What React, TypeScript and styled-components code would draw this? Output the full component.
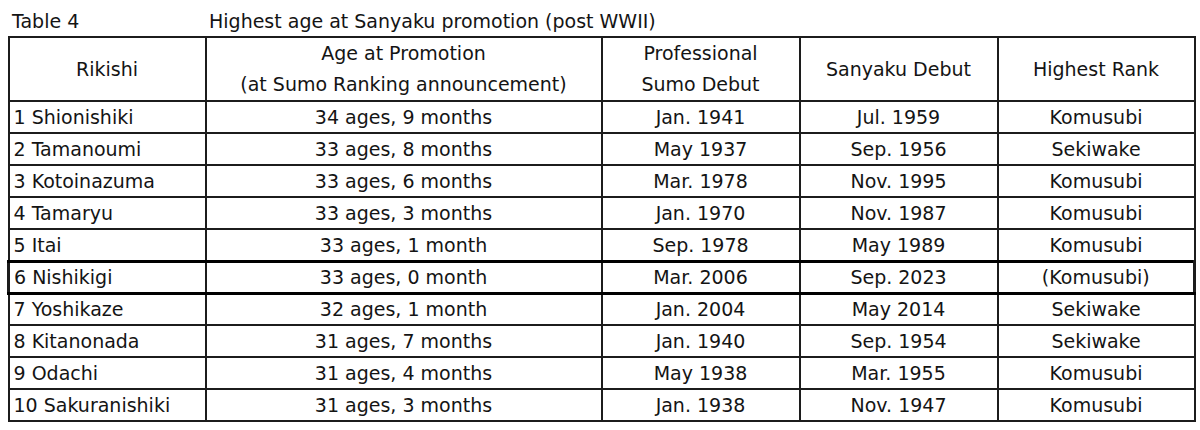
import React from "react";
import styled, { createGlobalStyle } from "styled-components";

const GlobalStyle = createGlobalStyle`
  body {
    margin: 0;
    background: #ffffff;
    color: #141414;
    font-family: "DejaVu Sans", "Noto Sans", sans-serif;
  }
`;

const Page = styled.div`
  padding: 0 7px;
  width: 1186px;
`;

const Caption = styled.div`
  display: grid;
  grid-template-columns: 197px 1fr;
  box-sizing: border-box;
  height: 36px;
  padding-top: 5px;
  align-items: center;
  font-size: 19px;
`;

const CaptionPart = styled.span`
  padding-left: 5px;
`;

const Table = styled.table`
  border-collapse: collapse;
  table-layout: fixed;
  width: 1186px;
  font-size: 19px;
`;

const HeadCell = styled.th`
  font-weight: normal;
  border: 2px solid #1c1c1c;
  height: 62px;
  padding: 0;
  text-align: center;
  line-height: 31px;
`;

const Row = styled.tr<{ $marked?: boolean }>`
  height: 32px;
  & > td {
    border-top-width: ${({ $marked }) => ($marked ? "3px" : "2px")};
    border-bottom-width: ${({ $marked }) => ($marked ? "3px" : "2px")};
    border-top-color: ${({ $marked }) => ($marked ? "#000" : "#1c1c1c")};
    border-bottom-color: ${({ $marked }) => ($marked ? "#000" : "#1c1c1c")};
  }
  & > td:first-child {
    border-left-width: ${({ $marked }) => ($marked ? "3px" : "2px")};
  }
  & > td:last-child {
    border-right-width: ${({ $marked }) => ($marked ? "3px" : "2px")};
  }
`;

const Cell = styled.td<{ $left?: boolean }>`
  border: 2px solid #1c1c1c;
  padding: 0 ${({ $left }) => ($left ? "4px" : "0")};
  text-align: ${({ $left }) => ($left ? "left" : "center")};
  white-space: nowrap;
  line-height: 28px;
`;

const widths = [197, 396, 198, 198, 197];

const rows = [
  ["1 Shionishiki", "34 ages, 9 months", "Jan. 1941", "Jul. 1959", "Komusubi"],
  ["2 Tamanoumi", "33 ages, 8 months", "May 1937", "Sep. 1956", "Sekiwake"],
  ["3 Kotoinazuma", "33 ages, 6 months", "Mar. 1978", "Nov. 1995", "Komusubi"],
  ["4 Tamaryu", "33 ages, 3 months", "Jan. 1970", "Nov. 1987", "Komusubi"],
  ["5 Itai", "33 ages, 1 month", "Sep. 1978", "May 1989", "Komusubi"],
  ["6 Nishikigi", "33 ages, 0 month", "Mar. 2006", "Sep. 2023", "(Komusubi)"],
  ["7 Yoshikaze", "32 ages, 1 month", "Jan. 2004", "May 2014", "Sekiwake"],
  ["8 Kitanonada", "31 ages, 7 months", "Jan. 1940", "Sep. 1954", "Sekiwake"],
  ["9 Odachi", "31 ages, 4 months", "May 1938", "Mar. 1955", "Komusubi"],
  ["10 Sakuranishiki", "31 ages, 3 months", "Jan. 1938", "Nov. 1947", "Komusubi"],
];

const App = () => (
  <Page>
    <GlobalStyle />
    <Caption>
      <CaptionPart>Table 4</CaptionPart>
      <CaptionPart>Highest age at Sanyaku promotion (post WWII)</CaptionPart>
    </Caption>
    <Table>
      <colgroup>
        {widths.map((w, i) => (
          <col key={i} style={{ width: w }} />
        ))}
      </colgroup>
      <thead>
        <tr>
          <HeadCell>Rikishi</HeadCell>
          <HeadCell>
            Age at Promotion
            <br />
            (at Sumo Ranking announcement)
          </HeadCell>
          <HeadCell>
            Professional
            <br />
            Sumo Debut
          </HeadCell>
          <HeadCell>Sanyaku Debut</HeadCell>
          <HeadCell>Highest Rank</HeadCell>
        </tr>
      </thead>
      <tbody>
        {rows.map((r) => (
          <Row key={r[0]} $marked={r[0] === "6 Nishikigi"}>
            {r.map((c, i) => (
              <Cell key={i} $left={i === 0}>
                {c}
              </Cell>
            ))}
          </Row>
        ))}
      </tbody>
    </Table>
  </Page>
);

export default App;
